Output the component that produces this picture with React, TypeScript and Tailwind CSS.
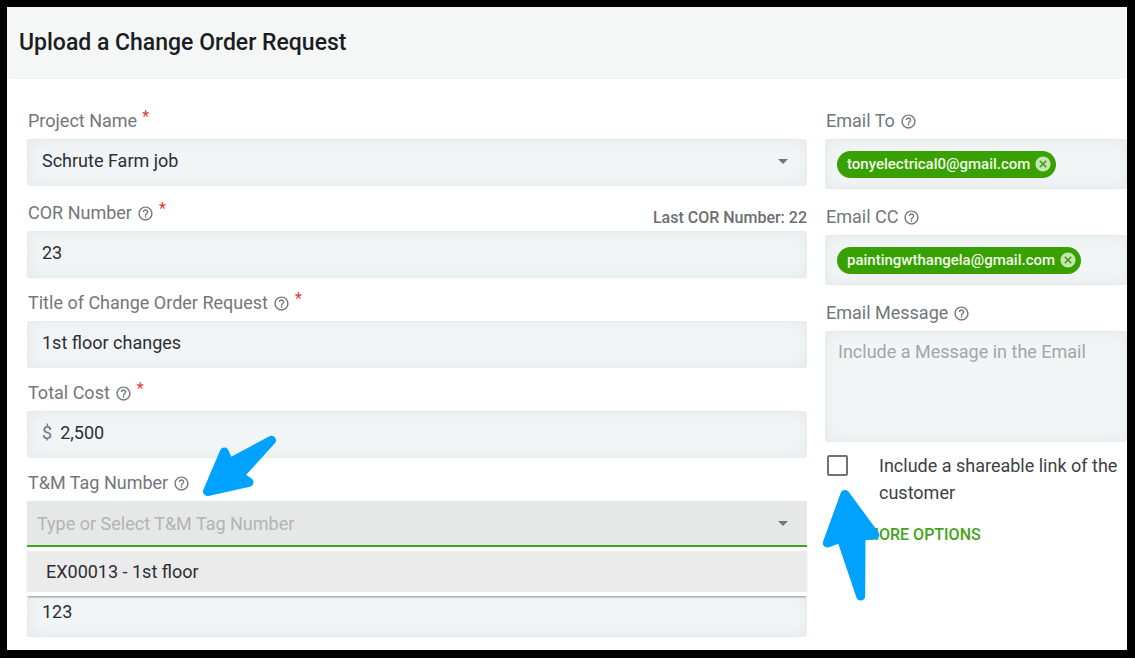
import type { ReactNode } from "react";
import { MdArrowDropDown, MdCancel, MdHelpOutline } from "react-icons/md";

const fieldBox =
  "rounded-xs border border-[#e6eced] bg-[#f1f5f6] shadow-[inset_0_0_16px_#e4e9ea] outline-none";
const textBox = `${fieldBox} block h-[47px] w-full px-3.5 pb-1 text-lg text-[#2b2f36]`;

type FieldLabelProps = {
  id: string;
  children: ReactNode;
  help?: boolean;
  required?: boolean;
};

function FieldLabel({ id, children, help, required }: FieldLabelProps) {
  return (
    <label htmlFor={id} className="flex items-center gap-[5px] pl-px text-lg leading-6 text-[#73767b]">
      {children}
      {help && <MdHelpOutline className="size-[17px]" aria-hidden="true" />}
      {required && <span className="-mt-2 text-base leading-6 text-[#e53935]">*</span>}
    </label>
  );
}

function EmailField({ id, label, email }: { id: string; label: string; email: string }) {
  return (
    <div className="flex flex-col gap-1.5">
      <FieldLabel id={id} help>
        {label}
      </FieldLabel>
      <div className={`${fieldBox} flex h-[50px] items-center border-r-0 pl-[11px]`}>
        <span className="flex h-[27px] shrink-0 items-center gap-1 rounded-full bg-[#38a000] pr-1 pl-2.5 text-[15px] font-medium text-[#f0fae8]">
          {email}
          <button type="button" aria-label={`Remove ${email}`} className="text-[#c5e5b3]">
            <MdCancel className="size-[18px]" />
          </button>
        </span>
        <input id={id} className="min-w-0 flex-1 bg-transparent outline-none" />
      </div>
    </div>
  );
}

export default function App() {
  return (
    <div className="flex min-h-screen flex-col border-t-7 border-r-8 border-b-8 border-l-7 border-black bg-white font-[Roboto,sans-serif]">
      <header className="flex h-[72px] items-center bg-[#f4f7f6] px-3">
        <h1 className="text-[23px] font-medium text-[#1a1d23]">Upload a Change Order Request</h1>
      </header>

      <form className="grid grid-cols-[minmax(0,1fr)_314px] gap-1.5 pt-[30px] pb-3 pl-5">
        <div className="flex flex-col gap-[13px]">
          <div className="flex flex-col gap-1.5 pb-0.5">
            <FieldLabel id="project" required>
              Project Name
            </FieldLabel>
            <div className="relative">
              <select id="project" className={`${textBox} appearance-none`}>
                <option>Schrute Farm job</option>
              </select>
              <MdArrowDropDown className="pointer-events-none absolute top-2.5 right-3 size-6 text-[#757575]" />
            </div>
          </div>

          <div className="flex flex-col gap-1.5">
            <div className="flex items-end justify-between">
              <FieldLabel id="cor" help required>
                COR Number
              </FieldLabel>
              <span className="text-base leading-3.5 font-medium text-[#6b6e73]">Last COR Number: 22</span>
            </div>
            <input id="cor" className={textBox} defaultValue="23" />
          </div>

          <div className="flex flex-col gap-1.5">
            <FieldLabel id="title" help required>
              Title of Change Order Request
            </FieldLabel>
            <input id="title" className={textBox} defaultValue="1st floor changes" />
          </div>

          <div className="flex flex-col gap-1.5">
            <FieldLabel id="cost" help required>
              Total Cost
            </FieldLabel>
            <div className={`${textBox} flex items-center gap-2`}>
              <span className="text-[#73767b]">$</span>
              <input id="cost" className="min-w-0 flex-1 outline-none" defaultValue="2,500" />
            </div>
          </div>

          <div className="relative flex flex-col gap-1.5">
            <FieldLabel id="tag" help>
              T&amp;M Tag Number
            </FieldLabel>
            <div className="relative">
              <input
                id="tag"
                role="combobox"
                aria-expanded="true"
                aria-controls="tag-options"
                placeholder="Type or Select T&M Tag Number"
                className="block h-[46px] w-full border-b-2 border-[#3fa51d] bg-[#e6e8e8] px-2.5 text-lg text-[#2b2f36] outline-none placeholder:text-[#b2b4b5]"
              />
              <MdArrowDropDown className="pointer-events-none absolute top-2.5 right-3 size-6 text-[#757575]" />
              <ul
                id="tag-options"
                role="listbox"
                className="absolute inset-x-0 top-full z-10 bg-white py-1 shadow-[0_2px_2px_-1px_#8a9092]"
              >
                <li role="option" aria-selected="true" className="bg-[#ebebeb] px-[19px] text-lg leading-[41px] text-[#2b2f36]">
                  EX00013 - 1st floor
                </li>
              </ul>
            </div>
            <svg viewBox="200 432 80 68" className="absolute -top-[39px] left-[173px] z-20 h-[68px] w-20" aria-hidden="true">
              <path
                d="M207.5 491.5L224.3 452L229.2 463L271.5 440.3L239.3 475.7L249 482.3Z"
                fill="#00a2ff"
                stroke="#00a2ff"
                strokeWidth="9"
                strokeLinejoin="round"
              />
            </svg>
          </div>

          <input aria-label="Number" className={`${textBox} mt-[30px]`} defaultValue="123" />
        </div>

        <div className="overflow-hidden pl-3">
          <div className="flex flex-col gap-4">
            <EmailField id="email-to" label="Email To" email="tonyelectrical0@gmail.com" />
            <EmailField id="email-cc" label="Email CC" email="paintingwthangela@gmail.com" />
            <div className="flex flex-col gap-1.5">
              <FieldLabel id="message" help>
                Email Message
              </FieldLabel>
              <textarea
                id="message"
                placeholder="Include a Message in the Email"
                className={`${fieldBox} block h-[111px] w-full resize-none border-r-0 px-3 py-2 text-lg leading-6 placeholder:text-[#a3a6a8]`}
              />
            </div>
          </div>

          <div className="relative mt-2.5">
            <label className="flex items-start gap-[31px] text-lg leading-[27px] text-[#3c3f44]">
              <input
                type="checkbox"
                className="mt-[3px] ml-0.5 size-[21px] shrink-0 appearance-none rounded-xs border-2 border-[#6f7277]"
              />
              <span>
                Include a shareable link of the
                <br />
                customer
              </span>
            </label>
            <button type="button" className="mt-[17px] ml-10 text-base leading-6 font-medium text-[#46a41a]">
              MORE OPTIONS
            </button>
            <svg viewBox="820 486 62 118" className="absolute top-[34px] -left-[5px] h-[118px] w-[62px]" aria-hidden="true">
              <path
                d="M845 494.4L874.8 535L861 536L860.7 596L841.1 538.1L827.3 543Z"
                fill="#00a2ff"
                stroke="#00a2ff"
                strokeWidth="9"
                strokeLinejoin="round"
              />
            </svg>
          </div>
        </div>
      </form>
    </div>
  );
}
